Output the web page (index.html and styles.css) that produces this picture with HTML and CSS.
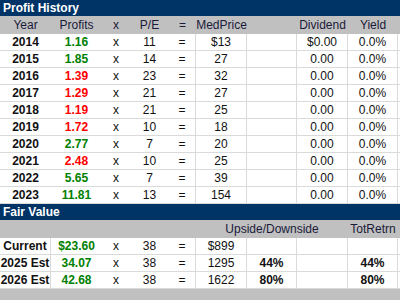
FILE: index.html
```html
<!DOCTYPE html>
<html lang="en">
<head>
    <meta charset="UTF-8">
    <title>Profit History</title>
    <link rel="stylesheet" href="styles.css">
</head>
<body>
    <table class="sheet">
        <colgroup>
            <col class="c-label">
            <col class="c-profit">
            <col class="c-x">
            <col class="c-pe">
            <col class="c-eq">
            <col class="c-price">
            <col class="c-up">
            <col class="c-div">
            <col class="c-yield">
            <col class="c-pad">
        </colgroup>
        <tr class="title"><td colspan="10">Profit History</td></tr>
        <tr class="head">
            <td>Year</td><td>Profits</td><td>x</td><td>P/E</td><td>=</td><td>MedPrice</td><td></td><td>Dividend</td><td>Yield</td><td></td>
        </tr>
        <tr class="row"><td class="b">2014</td><td class="b up">1.16</td><td>x</td><td>11</td><td class="g">=</td><td class="g">$13</td><td class="g"></td><td class="g">$0.00</td><td class="g">0.0%</td><td></td></tr>
        <tr class="row"><td class="b">2015</td><td class="b up">1.85</td><td>x</td><td>14</td><td class="g">=</td><td class="g">27</td><td class="g"></td><td class="g">0.00</td><td class="g">0.0%</td><td></td></tr>
        <tr class="row"><td class="b">2016</td><td class="b down">1.39</td><td>x</td><td>23</td><td class="g">=</td><td class="g">32</td><td class="g"></td><td class="g">0.00</td><td class="g">0.0%</td><td></td></tr>
        <tr class="row"><td class="b">2017</td><td class="b down">1.29</td><td>x</td><td>21</td><td class="g">=</td><td class="g">27</td><td class="g"></td><td class="g">0.00</td><td class="g">0.0%</td><td></td></tr>
        <tr class="row"><td class="b">2018</td><td class="b down">1.19</td><td>x</td><td>21</td><td class="g">=</td><td class="g">25</td><td class="g"></td><td class="g">0.00</td><td class="g">0.0%</td><td></td></tr>
        <tr class="row"><td class="b">2019</td><td class="b down">1.72</td><td>x</td><td>10</td><td class="g">=</td><td class="g">18</td><td class="g"></td><td class="g">0.00</td><td class="g">0.0%</td><td></td></tr>
        <tr class="row"><td class="b">2020</td><td class="b up">2.77</td><td>x</td><td>7</td><td class="g">=</td><td class="g">20</td><td class="g"></td><td class="g">0.00</td><td class="g">0.0%</td><td></td></tr>
        <tr class="row"><td class="b">2021</td><td class="b down">2.48</td><td>x</td><td>10</td><td class="g">=</td><td class="g">25</td><td class="g"></td><td class="g">0.00</td><td class="g">0.0%</td><td></td></tr>
        <tr class="row"><td class="b">2022</td><td class="b up">5.65</td><td>x</td><td>7</td><td class="g">=</td><td class="g">39</td><td class="g"></td><td class="g">0.00</td><td class="g">0.0%</td><td></td></tr>
        <tr class="row"><td class="b">2023</td><td class="b up">11.81</td><td>x</td><td>13</td><td class="g">=</td><td class="g">154</td><td class="g"></td><td class="g">0.00</td><td class="g">0.0%</td><td></td></tr>

        <tr class="title"><td colspan="10">Fair Value</td></tr>
        <tr class="head">
            <td></td><td></td><td></td><td></td><td></td><td></td><td><span class="spill">Upside/Downside</span></td><td></td><td>TotRetrn</td><td></td>
        </tr>
        <tr class="row"><td class="b g">Current</td><td class="b up">$23.60</td><td>x</td><td>38</td><td class="g">=</td><td class="g">$899</td><td class="g"></td><td class="g"></td><td class="g"></td><td></td></tr>
        <tr class="row"><td class="b g">2025 Est</td><td class="b up">34.07</td><td>x</td><td>38</td><td class="g">=</td><td class="g">1295</td><td class="g b">44%</td><td class="g"></td><td class="g b">44%</td><td></td></tr>
        <tr class="row"><td class="b g">2026 Est</td><td class="b up">42.68</td><td>x</td><td>38</td><td class="g">=</td><td class="g">1622</td><td class="g b">80%</td><td class="g"></td><td class="g b">80%</td><td></td></tr>
    </table>
    <div class="footer"></div>
</body>
</html>
```

FILE: styles.css
```css
* {
    margin: 0;
    padding: 0;
    box-sizing: border-box;
}

body {
    font-family: "Liberation Sans", Arial, sans-serif;
    font-size: 12px;
    background: white;
    width: 400px;
    height: 300px;
    overflow: hidden;
}

.sheet {
    width: 400px;
    table-layout: fixed;
    border-collapse: separate;
    border-spacing: 0;
}

.c-label { width: 51px; }
.c-profit { width: 51px; }
.c-x { width: 28px; }
.c-pe { width: 39px; }
.c-eq { width: 27px; }
.c-price { width: 51px; }
.c-up { width: 50px; }
.c-div { width: 51px; }
.c-yield { width: 50px; }
.c-pad { width: 2px; }

td {
    text-align: center;
    vertical-align: middle;
    white-space: nowrap;
    color: #111;
    line-height: 14px;
}

.title td {
    height: 16px;
    background: #003366;
    color: white;
    font-weight: bold;
    text-align: left;
    padding-left: 3px;
}

.head td {
    height: 18px;
    background: #c0c0c0;
    color: #1a1a3a;
}

/* text wider than its cell, centred over it */
.spill {
    display: inline-block;
    margin: 0 -30px;
}

.row td {
    height: 17px;
    border-bottom: 1px solid #dadada;
}

.row td.g {
    border-right: 1px solid #dadada;
}

.b {
    font-weight: bold;
}

.up {
    color: #008000;
}

.down {
    color: #ff0000;
}

.footer {
    height: 11px;
    background: #c0c0c0;
}
```
